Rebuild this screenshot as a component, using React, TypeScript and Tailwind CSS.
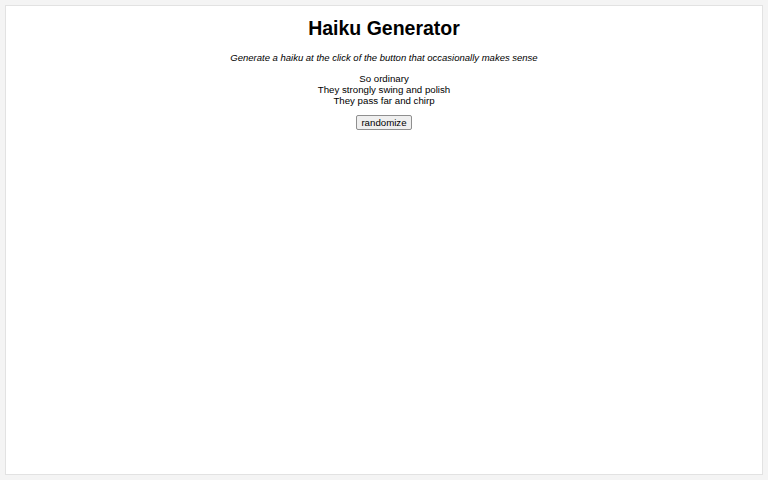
import React, { useState } from 'react';

const haikus = [
  ['So ordinary', 'They strongly swing and polish', 'They pass far and chirp'],
  ['Quiet morning rain', 'The old dogs softly wander', 'They sleep by the door'],
  ['Under the red moon', 'Some rivers loudly whisper', 'They fold and return'],
];

export default function App() {
  const [index, setIndex] = useState(0);
  const lines = haikus[index];

  return (
    <div className="min-h-screen bg-[#f4f4f4] p-[5px] font-['Liberation_Sans',Arial,sans-serif] text-black">
      <div className="flex h-[470px] flex-col items-center border border-[#e2e2e2] bg-white">
        {/* Titre */}
        <h1 className="mt-[10px] text-[19.5px] font-bold leading-[24px]">Haiku Generator</h1>

        <p className="mt-[12px] text-[9.5px] italic leading-[12px]">
          Generate a haiku at the click of the button that occasionally makes sense
        </p>

        {/* Haiku */}
        <div className="mt-[9px] flex flex-col items-center text-[9.7px] leading-[11px]">
          {lines.map((line) => (
            <span key={line}>{line}</span>
          ))}
        </div>

        <button
          onClick={() => setIndex((index + 1) % haikus.length)}
          className="mt-[9px] h-[15px] rounded-[2px] border border-[#8f8f8f] bg-[#efefef] px-[4px] text-[9.7px] leading-[12px]"
        >
          randomize
        </button>
      </div>
    </div>
  );
}
